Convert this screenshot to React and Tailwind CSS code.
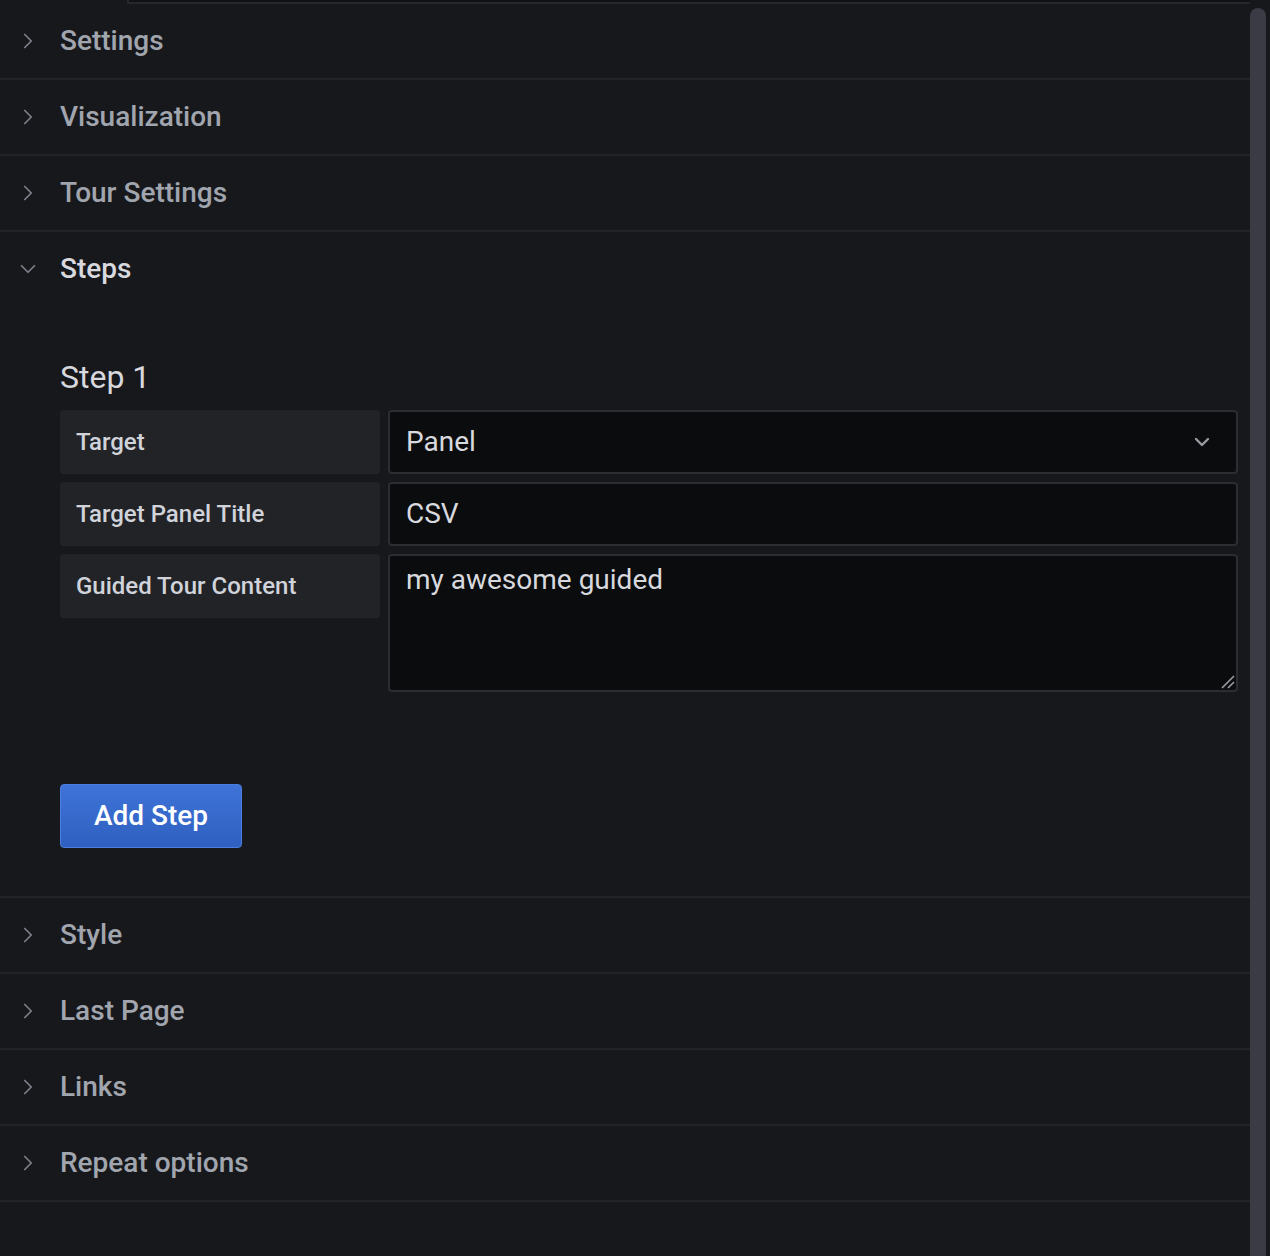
import { ChevronRight, ChevronDown } from "lucide-react";

const before = ["Settings", "Visualization", "Tour Settings"];
const after = ["Style", "Last Page", "Links", "Repeat options"];

function SectionHeader({ title, open }) {
    const Icon = open ? ChevronDown : ChevronRight;
    return (
        <div className="h-[74px] flex items-center">
            <div className="w-[60px] flex justify-center pr-[4px]">
                <Icon size={26} strokeWidth={1.6} className="text-[#7d8089]" />
            </div>
            <span className={`text-[28px] font-medium ${open ? "text-[#d8d9de]" : "text-[#a1a5ae]"}`}>{title}</span>
        </div>
    );
}

function Field({ label, children }) {
    return (
        <div className="flex items-start gap-[8px]">
            <div className="w-[320px] h-[64px] shrink-0 rounded-[4px] bg-[#222327] flex items-center px-[16px] text-[24px] font-medium text-[#d0d3da]">
                {label}
            </div>
            <div className="flex-1">{children}</div>
        </div>
    );
}

export default function App() {
    return (
        <div className="min-h-[1256px] bg-[#17181c] flex font-['Roboto',sans-serif]">
            <div className="w-[1250px] shrink-0">
                <div className="h-[4px] ml-[127px] border-l-2 border-b-2 border-[#26272c] bg-[#101114]" />

                {before.map((t) => (
                    <div key={t} className="border-b-2 border-[#222328]">
                        <SectionHeader title={t} />
                    </div>
                ))}

                <div className="border-b-2 border-[#222328]">
                    <SectionHeader title="Steps" open />
                    <div className="pl-[60px] pr-[12px] pt-[53px] pb-[48px]">
                        <div className="text-[32px] leading-[36px] text-[#d8d9de] mb-[15px]">Step 1</div>
                        <div className="flex flex-col gap-[8px]">
                            <Field label="Target">
                                <div className="h-[64px] rounded-[4px] border-2 border-[#2b2d31] bg-[#0b0c0e] flex items-center justify-between pl-[16px] pr-[22px]">
                                    <span className="text-[28px] text-[#d8d9de]">Panel</span>
                                    <ChevronDown size={24} strokeWidth={2.4} className="text-[#9a9ca3]" />
                                </div>
                            </Field>
                            <Field label="Target Panel Title">
                                <div className="h-[64px] rounded-[4px] border-2 border-[#2b2d31] bg-[#0b0c0e] flex items-center pl-[16px]">
                                    <span className="text-[28px] text-[#d8d9de]">CSV</span>
                                </div>
                            </Field>
                            <Field label="Guided Tour Content">
                                <div className="relative">
                                    <textarea
                                        readOnly
                                        defaultValue="my awesome guided"
                                        className="block w-full h-[138px] rounded-[4px] border-2 border-[#2b2d31] bg-[#0b0c0e] pl-[16px] pt-[6px] text-[28px] leading-[36px] text-[#d8d9de] outline-none resize-none"
                                    />
                                    <svg width="14" height="14" viewBox="0 0 14 14" className="absolute right-[3px] bottom-[3px]">
                                        <path d="M13 1 L1 13 M13 7 L7 13" stroke="#9a9ca3" strokeWidth="1.6" />
                                    </svg>
                                </div>
                            </Field>
                        </div>
                        <button className="mt-[92px] h-[64px] px-[33px] rounded-[4px] border border-[#4a7ee0] bg-gradient-to-b from-[#3f73d8] to-[#2f60c0] text-[28px] font-medium text-white">
                            Add Step
                        </button>
                    </div>
                </div>

                {after.map((t) => (
                    <div key={t} className="border-b-2 border-[#222328]">
                        <SectionHeader title={t} />
                    </div>
                ))}
            </div>
            <div className="w-[20px] pt-[8px] pr-[4px] flex">
                <div className="flex-1 rounded-t-full bg-[#3a3b45]" />
            </div>
        </div>
    );
}
